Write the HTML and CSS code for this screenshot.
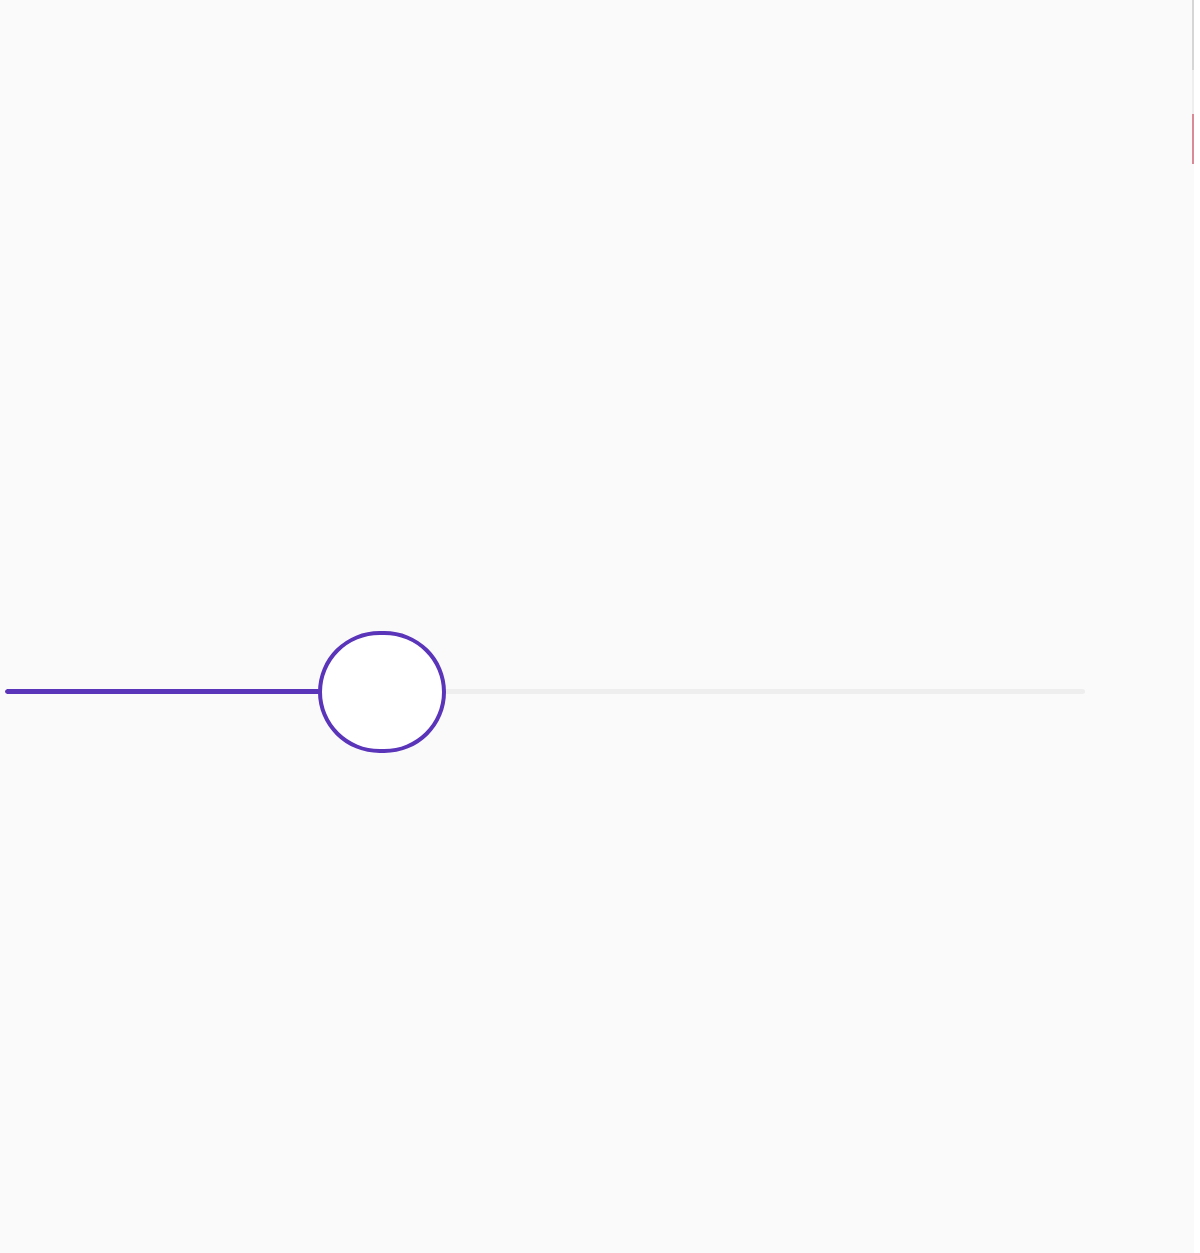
FILE: index.html
```html
<!DOCTYPE html>
<html>
<head>
<meta charset="utf-8">
<link rel="stylesheet" href="styles.css">
</head>
<body>
<div class="page">
  <main class="stage">
    <div class="slider">
      <div class="track">
        <div class="fill" style="width: 315px"></div>
      </div>
      <div class="thumb"></div>
    </div>
  </main>
  <div class="edge">
    <div class="edge-gray"></div>
    <div class="edge-gap"></div>
    <div class="edge-pink"></div>
  </div>
  <div class="edge-white"></div>
</div>
</body>
</html>
```
FILE: styles.css
```css
html, body {
  margin: 0;
  padding: 0;
  background: #fafafa;
  font-family: "Liberation Sans", Arial, sans-serif;
}
.page {
  display: flex;
  width: 1200px;
  height: 1253px;
}
.stage {
  flex: 1;
  padding-top: 689px;
  padding-left: 5px;
}
.slider {
  position: relative;
  width: 1080px;
}
.track {
  height: 5px;
  border-radius: 3px;
  background: #eeeeee;
  overflow: hidden;
}
.fill {
  height: 100%;
  background: #5b35b9;
  border-radius: 3px;
}
.thumb {
  position: absolute;
  left: 313px;
  top: -58px;
  width: 120px;
  height: 114px;
  border: 4px solid #5b35b9;
  border-radius: 50% / 52%;
  background: #ffffff;
}
.edge {
  width: 2px;
  display: flex;
  flex-direction: column;
}
.edge-gray {
  height: 70px;
  background: #d6d6d6;
}
.edge-gap {
  height: 44px;
  background: #eeeeee;
}
.edge-pink {
  height: 50px;
  background: #d98a96;
}
.edge-white {
  width: 6px;
  background: #ffffff;
}
```
